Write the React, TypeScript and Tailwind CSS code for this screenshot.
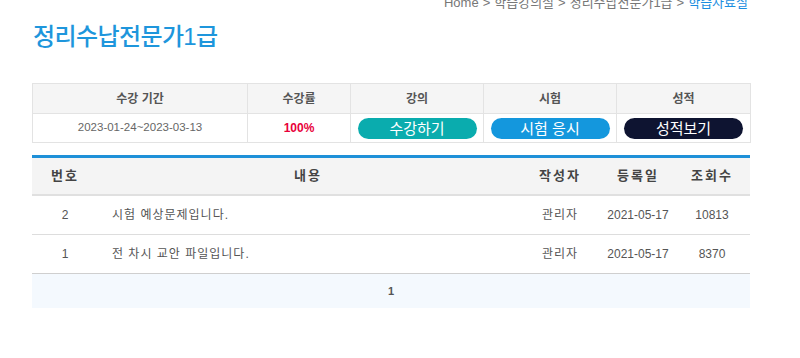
import React from "react"

const ko = { fontFamily: '"Liberation Sans", "Noto Sans CJK KR", sans-serif' }

const posts = [
  { no: 2, title: "시험 예상문제입니다.", writer: "관리자", date: "2021-05-17", hits: "10813" },
  { no: 1, title: "전 차시 교안 파일입니다.", writer: "관리자", date: "2021-05-17", hits: "8370" }
]

export default function App() {
  return (
    <div className="w-[800px] h-[358px] overflow-hidden bg-white pl-[32px] pr-[50px]" style={ko}>
      {/* 경로 */}
      <div className="flex justify-end -mt-[4px] text-[13px] leading-[14px] text-[#777] pr-[2px]">
        <span>Home</span>
        <span className="mx-[4px]">&gt;</span>
        <span>학습강의실</span>
        <span className="mx-[4px]">&gt;</span>
        <span>정리수납전문가1급</span>
        <span className="mx-[4px]">&gt;</span>
        <span className="text-[#1a8ee0]">학습자료실</span>
      </div>

      <h1 className="mt-[14px] ml-[1px] text-[24px] leading-[26px] font-medium text-[#1e96dc] tracking-[-0.6px]">
        정리수납전문가1급
      </h1>

      {/* 수강 정보 */}
      <table className="mt-[33px] w-[718px] border-collapse table-fixed text-[12px]">
        <colgroup>
          <col className="w-[215px]" />
          <col className="w-[103px]" />
          <col className="w-[133px]" />
          <col className="w-[133px]" />
          <col className="w-[134px]" />
        </colgroup>
        <thead>
          <tr className="bg-[#f5f5f5] h-[30px] text-[#555] font-bold">
            <th className="border border-[#e3e3e3]">수강 기간</th>
            <th className="border border-[#e3e3e3]">수강률</th>
            <th className="border border-[#e3e3e3]">강의</th>
            <th className="border border-[#e3e3e3]">시험</th>
            <th className="border border-[#e3e3e3]">성적</th>
          </tr>
        </thead>
        <tbody>
          <tr className="h-[29px] text-center">
            <td className="border border-[#e3e3e3] text-[#666] text-[11.5px]">2023-01-24~2023-03-13</td>
            <td className="border border-[#e3e3e3] text-[#e8003a] font-bold">100%</td>
            <td className="border border-[#e3e3e3]">
              <button className="mx-auto flex items-center justify-center w-[119px] h-[21px] rounded-full bg-[#0aacae] text-white text-[15px] leading-none">
                수강하기
              </button>
            </td>
            <td className="border border-[#e3e3e3]">
              <button className="mx-auto flex items-center justify-center w-[119px] h-[21px] rounded-full bg-[#1497dd] text-white text-[15px] leading-none">
                시험 응시
              </button>
            </td>
            <td className="border border-[#e3e3e3]">
              <button className="mx-auto flex items-center justify-center w-[119px] h-[21px] rounded-full bg-[#0e1431] text-white text-[15px] leading-none">
                성적보기
              </button>
            </td>
          </tr>
        </tbody>
      </table>

      {/* 게시판 */}
      <div className="mt-[12px] w-[718px] border-t-[3px] border-[#1e90d8]">
        <div className="flex h-[38px] items-center bg-[#f4f4f4] border-b-2 border-[#e0e0e0] text-[13px] font-bold text-[#444] tracking-[2px]">
          <div className="w-[66px] text-center">번호</div>
          <div className="flex-1 text-center">내용</div>
          <div className="w-[84px] text-center">작성자</div>
          <div className="w-[72px] text-center">등록일</div>
          <div className="w-[76px] text-center">조회수</div>
        </div>
        {posts.map((p, i) => (
          <div
            key={p.no}
            className={`flex h-[39px] items-center border-b text-[12px] text-[#555] ${
              i === posts.length - 1 ? "border-[#cfcfcf]" : "border-[#dddddd]"
            }`}
          >
            <div className="w-[66px] text-center">{p.no}</div>
            <div className="flex-1 pl-[14px] tracking-[1px]">{p.title}</div>
            <div className="w-[84px] text-center tracking-[1px]">{p.writer}</div>
            <div className="w-[72px] text-center">{p.date}</div>
            <div className="w-[76px] text-center">{p.hits}</div>
          </div>
        ))}
        <div className="flex h-[34px] items-center justify-center bg-[#f4f9fe] text-[11px] font-bold text-[#555]">
          1
        </div>
      </div>
    </div>
  )
}
